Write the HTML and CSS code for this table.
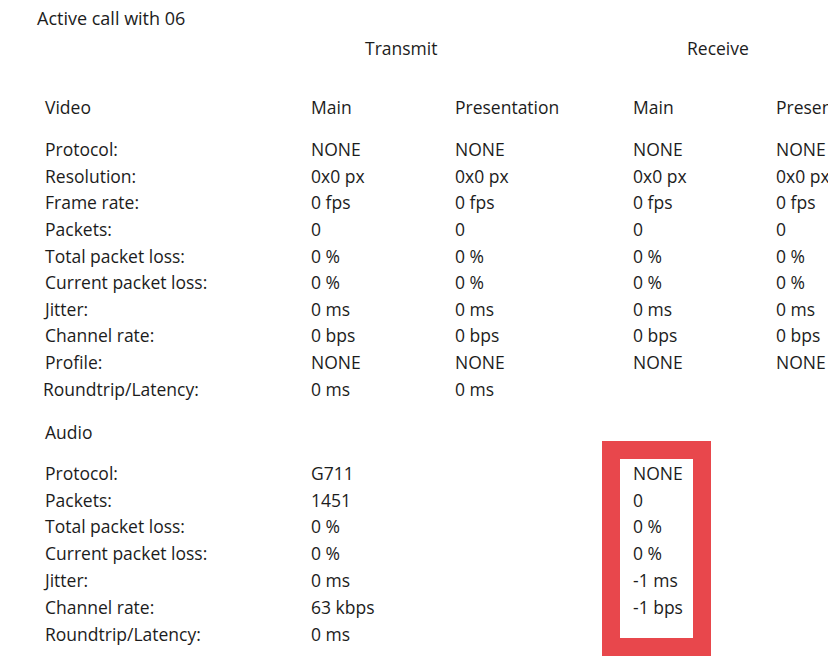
FILE: index.html
```html
<!DOCTYPE html>
<html lang="en">
<head>
<meta charset="utf-8">
<title>Call statistics</title>
<link rel="stylesheet" href="styles.css">
</head>
<body>
<div class="page">
  <div class="title">Active call with 06</div>
  <div class="grid groups">
    <div></div>
    <div class="group">Transmit</div>
    <div class="group">Receive</div>
  </div>

  <div class="grid sec-head">
    <div>Video</div><div>Main</div><div>Presentation</div><div>Main</div><div>Presentation</div>
  </div>
  <div class="grid rows">
    <div>Protocol:</div><div>NONE</div><div>NONE</div><div>NONE</div><div>NONE</div>
    <div>Resolution:</div><div>0x0 px</div><div>0x0 px</div><div>0x0 px</div><div>0x0 px</div>
    <div>Frame rate:</div><div>0 fps</div><div>0 fps</div><div>0 fps</div><div>0 fps</div>
    <div>Packets:</div><div>0</div><div>0</div><div>0</div><div>0</div>
    <div>Total packet loss:</div><div>0 %</div><div>0 %</div><div>0 %</div><div>0 %</div>
    <div>Current packet loss:</div><div>0 %</div><div>0 %</div><div>0 %</div><div>0 %</div>
    <div>Jitter:</div><div>0 ms</div><div>0 ms</div><div>0 ms</div><div>0 ms</div>
    <div>Channel rate:</div><div>0 bps</div><div>0 bps</div><div>0 bps</div><div>0 bps</div>
    <div>Profile:</div><div>NONE</div><div>NONE</div><div>NONE</div><div>NONE</div>
    <div class="shift">Roundtrip/Latency:</div><div>0 ms</div><div>0 ms</div><div></div><div></div>
  </div>

  <div class="grid sec-head audio">
    <div>Audio</div><div></div><div></div><div></div><div></div>
  </div>
  <div class="grid rows audio-rows">
    <div>Protocol:</div><div>G711</div><div></div><div>NONE</div><div></div>
    <div>Packets:</div><div>1451</div><div></div><div>0</div><div></div>
    <div>Total packet loss:</div><div>0 %</div><div></div><div>0 %</div><div></div>
    <div>Current packet loss:</div><div>0 %</div><div></div><div>0 %</div><div></div>
    <div>Jitter:</div><div>0 ms</div><div></div><div>-1 ms</div><div></div>
    <div>Channel rate:</div><div>63 kbps</div><div></div><div>-1 bps</div><div></div>
    <div>Roundtrip/Latency:</div><div>0 ms</div><div></div><div></div><div></div>
  </div>

  <div class="highlight"></div>
</div>
</body>
</html>
```

FILE: styles.css
```css
html, body {
  margin: 0;
  padding: 0;
  background: #ffffff;
  overflow: hidden;
}

body {
  font-family: "Open Sans", "Noto Sans", sans-serif;
  font-size: 17.5px;
  color: #1c1c1c;
  width: 828px;
  height: 659px;
}

.page {
  position: relative;
  padding: 5px 0 0 37px;
  white-space: nowrap;
}

.title {
  line-height: 26px;
  font-size: 18px;
}

.grid {
  display: grid;
  grid-template-columns: 266px 144px 178px 143px 200px;
  margin-left: 8px;
  line-height: 26.6px;
}

.groups {
  margin-top: 4px;
}

.group {
  grid-column: span 2;
  padding-left: 54px;
}

.sec-head {
  margin-top: 32px;
  margin-bottom: 16px;
}

.sec-head.audio {
  margin-top: 17px;
  margin-bottom: 14px;
}

.audio-rows {
  line-height: 26.8px;
}

.shift {
  margin-left: -2px;
}

.highlight {
  position: absolute;
  left: 602px;
  top: 441px;
  width: 73px;
  height: 179px;
  border: 18px solid #e8474c;
}
```
